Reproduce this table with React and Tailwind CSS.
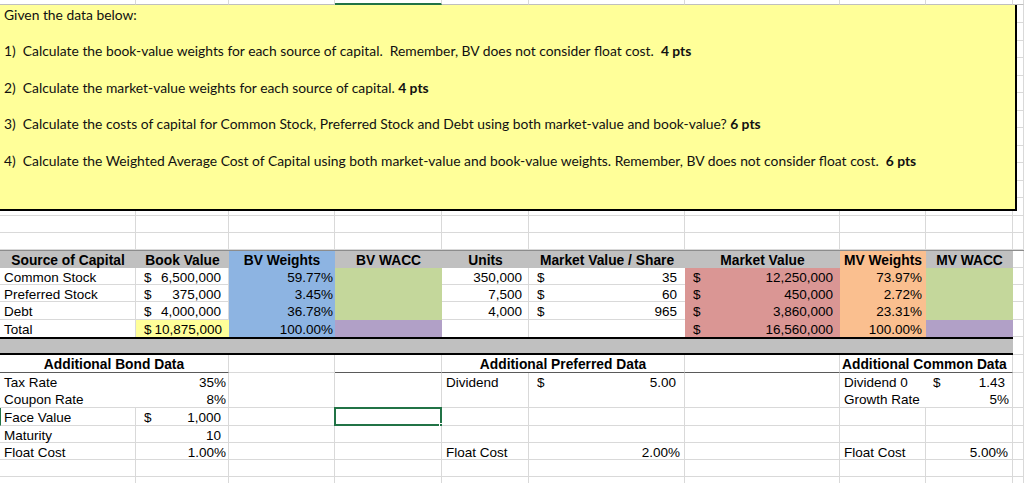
import clsx from "clsx";

const W = {
  A: "w-[136px]",
  B: "w-[93px]",
  C: "w-[106px]",
  D: "w-[107px]",
  E: "w-[87px]",
  F: "w-[156px]",
  G: "w-[155px]",
  H: "w-[86px]",
  I: "w-[87px]",
  J: "flex-1",
  AB: "w-[229px]",
  EF: "w-[243px]",
  HI: "w-[173px]",
};

const GRAY = "bg-[#c0c0c0]";
const BLUE = "bg-[#8db4e2]";
const GREEN = "bg-[#c4d79b]";
const PURPLE = "bg-[#b1a0c7]";
const RED = "bg-[#da9694]";
const ORANGE = "bg-[#fabf8f]";
const YELLOW = "bg-[#ffff99]";

function Cell({ w, fill = "bg-white", noR, noB, bot, className, children }) {
  return (
    <div
      className={clsx(
        "relative h-full shrink-0 whitespace-nowrap",
        w,
        fill,
        !noR && "border-r border-r-[#d9d9d9]",
        bot ? bot : !noB && "border-b border-b-[#d9d9d9]",
        className
      )}
    >
      {children}
    </div>
  );
}

function Row({ h, children }) {
  return <div className={clsx("flex w-full", h)}>{children}</div>;
}

function Money({ value, pl = "pl-[8px]", pr = "pr-[7px]" }) {
  return (
    <div className={clsx("flex justify-between", pl, pr)}>
      <span>$</span>
      <span>{value}</span>
    </div>
  );
}

function Num({ value, pr = "pr-[3px]" }) {
  return <div className={clsx("text-right", pr)}>{value}</div>;
}

function Label({ children }) {
  return <div className="pl-[4px]">{children}</div>;
}

function EmptyRow({ h }) {
  return (
    <Row h={h}>
      {["A", "B", "C", "D", "E", "F", "G", "H", "I", "J"].map((c) => (
        <Cell key={c} w={W[c]} />
      ))}
    </Row>
  );
}

const upperRows = [
  "h-[18px]", "h-[18px]", "h-[17px]", "h-[18px]", "h-[17px]", "h-[18px]", "h-[17px]",
  "h-[18px]", "h-[17px]", "h-[18px]", "h-[17px]", "h-[18px]", "h-[17px]", "h-[17px]",
];

const boxLines = [
  ["Given the data below:", ""],
  null,
  ["1)  Calculate the book-value weights for each source of capital.  Remember, BV does not consider float cost.  ", "4 pts"],
  null,
  ["2)  Calculate the market-value weights for each source of capital. ", "4 pts"],
  null,
  ["3)  Calculate the costs of capital for Common Stock, Preferred Stock and Debt using both market-value and book-value? ", "6 pts"],
  null,
  ["4)  Calculate the Weighted Average Cost of Capital using both market-value and book-value weights. Remember, BV does not consider float cost.  ", "6 pts"],
];

function TaskBox() {
  return (
    <div className="absolute left-0 top-[5px] h-[206px] w-[1017px] border-b-2 border-r-2 border-black bg-[#ffff99] pl-[4px] pt-[1px] font-['Lato','Open_Sans',sans-serif] text-[13.85px] leading-[18.2px] text-[#111]">
      {boxLines.map((line, i) =>
        line ? (
          <div key={i} className="whitespace-pre">
            {line[0]}
            <b className="font-bold">{line[1]}</b>
          </div>
        ) : (
          <div key={i} className="h-[18.2px]" />
        )
      )}
    </div>
  );
}

export default function App() {
  return (
    <div className="relative h-[483px] w-[1024px] overflow-hidden bg-white font-['Liberation_Sans',Arial,sans-serif] text-[13.5px] text-black">
      {/* partial row at the very top */}
      <Row h="h-[5px]">
        <Cell w={W.A} bot="border-b border-b-[#bfbfbf]" />
        <Cell w={W.B} bot="border-b border-b-[#bfbfbf]" />
        <Cell w={W.C} bot="border-b border-b-[#bfbfbf]" />
        <Cell w={W.D} bot="border-b-2 border-b-[#217346]" />
        <Cell w={W.E} bot="border-b border-b-[#bfbfbf]" />
        <Cell w={W.F} bot="border-b border-b-[#bfbfbf]" />
        <Cell w={W.G} bot="border-b border-b-[#bfbfbf]" />
        <Cell w={W.H} bot="border-b border-b-[#bfbfbf]" />
        <Cell w={W.I} bot="border-b border-b-[#bfbfbf]" />
        <Cell w={W.J} bot="border-b border-b-[#bfbfbf]" />
      </Row>

      {upperRows.map((h, i) => (
        <EmptyRow key={i} h={h} />
      ))}

      {/* capital table header */}
      <div className="flex h-[18px] w-full border-t border-t-[#8c8c8c] text-[13.8px] font-bold leading-[19px]">
        <Cell w={W.A} fill={GRAY} noR noB className="text-center">Source of Capital</Cell>
        <Cell w={W.B} fill={GRAY} noR noB className="text-center">Book Value</Cell>
        <Cell w={W.C} fill={BLUE} noR noB className="text-center">BV Weights</Cell>
        <Cell w={W.D} fill={GRAY} noR noB className="text-center">BV WACC</Cell>
        <Cell w={W.E} fill={GRAY} noR noB className="text-center">Units</Cell>
        <Cell w={W.F} fill={GRAY} noR noB className="text-center">Market Value / Share</Cell>
        <Cell w={W.G} fill={GRAY} noR noB className="text-center">Market Value</Cell>
        <Cell w={W.H} fill={ORANGE} noR noB className="text-center">MV Weights</Cell>
        <Cell w={W.I} fill={GRAY} noR noB className="text-center">MV WACC</Cell>
        <Cell w={W.J} />
      </div>

      {[
        ["h-[17px]", "Common Stock", "6,500,000", "59.77%", "350,000", "35", "12,250,000", "73.97%"],
        ["h-[17px]", "Preferred Stock", "375,000", "3.45%", "7,500", "60", "450,000", "2.72%"],
        ["h-[18px]", "Debt", "4,000,000", "36.78%", "4,000", "965", "3,860,000", "23.31%"],
      ].map(([h, name, bv, bvw, units, mvs, mv, mvw]) => (
        <div key={name} className={clsx("flex w-full leading-[19px]", h)}>
          <Cell w={W.A}><Label>{name}</Label></Cell>
          <Cell w={W.B}><Money value={bv} /></Cell>
          <Cell w={W.C} fill={BLUE} noR noB><Num value={bvw} pr="pr-[2px]" /></Cell>
          <Cell w={W.D} fill={GREEN} noR noB />
          <Cell w={W.E}><Num value={units} pr="pr-[6px]" /></Cell>
          <Cell w={W.F} noR><Money value={mvs} pr="pr-[8px]" /></Cell>
          <Cell w={W.G} fill={RED} noR noB><Money value={mv} /></Cell>
          <Cell w={W.H} fill={ORANGE} noR noB><Num value={mvw} pr="pr-[4px]" /></Cell>
          <Cell w={W.I} fill={GREEN} noR noB />
          <Cell w={W.J} />
        </div>
      ))}

      <div className="flex h-[17px] w-full leading-[19px]">
        <Cell w={W.A} noB><Label>Total</Label></Cell>
        <Cell w={W.B} fill={YELLOW} noR noB><Money value="10,875,000" /></Cell>
        <Cell w={W.C} fill={BLUE} noR noB><Num value="100.00%" pr="pr-[2px]" /></Cell>
        <Cell w={W.D} fill={PURPLE} noR noB />
        <Cell w={W.E} noB />
        <Cell w={W.F} noR noB />
        <Cell w={W.G} fill={RED} noR noB><Money value="16,560,000" /></Cell>
        <Cell w={W.H} fill={ORANGE} noR noB><Num value="100.00%" pr="pr-[4px]" /></Cell>
        <Cell w={W.I} fill={PURPLE} noR noB />
        <Cell w={W.J} />
      </div>

      {/* gray divider band */}
      <div className="flex h-[18px] w-full">
        <div className="h-full w-[1013px] shrink-0 border-y-2 border-black bg-[#c0c0c0]" />
        <Cell w={W.J} />
      </div>

      {/* additional data headers */}
      <div className="flex h-[18px] w-full text-[13.8px] font-bold leading-[20px]">
        <Cell w={W.AB} bot="border-b border-b-[#5a5a5a]" className="text-center">Additional Bond Data</Cell>
        <Cell w={W.C} />
        <Cell w={W.D} bot="border-b border-b-[#5a5a5a]" />
        <Cell w={W.EF} bot="border-b border-b-[#5a5a5a]" className="text-center">Additional Preferred Data</Cell>
        <Cell w={W.G} bot="border-b border-b-[#5a5a5a]" />
        <Cell w={W.HI} bot="border-b border-b-[#5a5a5a]" className="pl-[2px]">Additional Common Data</Cell>
        <Cell w={W.J} />
      </div>

      <div className="flex h-[17px] w-full leading-[19px]">
        <Cell w={W.A} noR noB><Label>Tax Rate</Label></Cell>
        <Cell w={W.B} noB><Num value="35%" pr="pr-[2px]" /></Cell>
        <Cell w={W.C} noB />
        <Cell w={W.D} noB />
        <Cell w={W.E} noB><Label>Dividend</Label></Cell>
        <Cell w={W.F} noB><Money value="5.00" pr="pr-[8px]" /></Cell>
        <Cell w={W.G} noB />
        <Cell w={W.H} noR noB><Label>Dividend 0</Label></Cell>
        <Cell w={W.I} noB><Money value="1.43" pl="pl-[7px]" pr="pr-[7px]" /></Cell>
        <Cell w={W.J} noB />
      </div>

      <div className="flex h-[18px] w-full leading-[19px]">
        <Cell w={W.A} noR><Label>Coupon Rate</Label></Cell>
        <Cell w={W.B}><Num value="8%" pr="pr-[2px]" /></Cell>
        <Cell w={W.C} />
        <Cell w={W.D} />
        <Cell w={W.E} />
        <Cell w={W.F} />
        <Cell w={W.G} />
        <Cell w={W.H} noR><Label>Growth Rate</Label></Cell>
        <Cell w={W.I}><Num value="5%" pr="pr-[3px]" /></Cell>
        <Cell w={W.J} />
      </div>

      <div className="flex h-[18px] w-full leading-[19px]">
        <Cell w={W.A} className="border-l border-l-[#217346]"><div className="pl-[3px]">Face Value</div></Cell>
        <Cell w={W.B}><Money value="1,000" /></Cell>
        <Cell w={W.C} />
        <Cell w={W.D}>
          <div className="absolute -left-px -top-px h-[19px] w-[108px] border-2 border-[#217346]" />
          <div className="absolute -bottom-[2px] right-[-2px] h-[4px] w-[4px] border border-white bg-[#217346]" />
        </Cell>
        <Cell w={W.E} />
        <Cell w={W.F} />
        <Cell w={W.G} />
        <Cell w={W.H} />
        <Cell w={W.I} />
        <Cell w={W.J} />
      </div>

      <div className="flex h-[17px] w-full leading-[19px]">
        <Cell w={W.A}><Label>Maturity</Label></Cell>
        <Cell w={W.B}><Num value="10" pr="pr-[7px]" /></Cell>
        <Cell w={W.C} />
        <Cell w={W.D} />
        <Cell w={W.E} />
        <Cell w={W.F} />
        <Cell w={W.G} />
        <Cell w={W.H} />
        <Cell w={W.I} />
        <Cell w={W.J} />
      </div>

      <div className="flex h-[17px] w-full leading-[19px]">
        <Cell w={W.A}><Label>Float Cost</Label></Cell>
        <Cell w={W.B}><Num value="1.00%" pr="pr-[2px]" /></Cell>
        <Cell w={W.C} />
        <Cell w={W.D} />
        <Cell w={W.E}><Label>Float Cost</Label></Cell>
        <Cell w={W.F}><Num value="2.00%" pr="pr-[4px]" /></Cell>
        <Cell w={W.G} />
        <Cell w={W.H}><Label>Float Cost</Label></Cell>
        <Cell w={W.I}><Num value="5.00%" pr="pr-[4px]" /></Cell>
        <Cell w={W.J} />
      </div>

      <EmptyRow h="h-[17px]" />
      <EmptyRow h="h-[17px]" />

      <TaskBox />
    </div>
  );
}
